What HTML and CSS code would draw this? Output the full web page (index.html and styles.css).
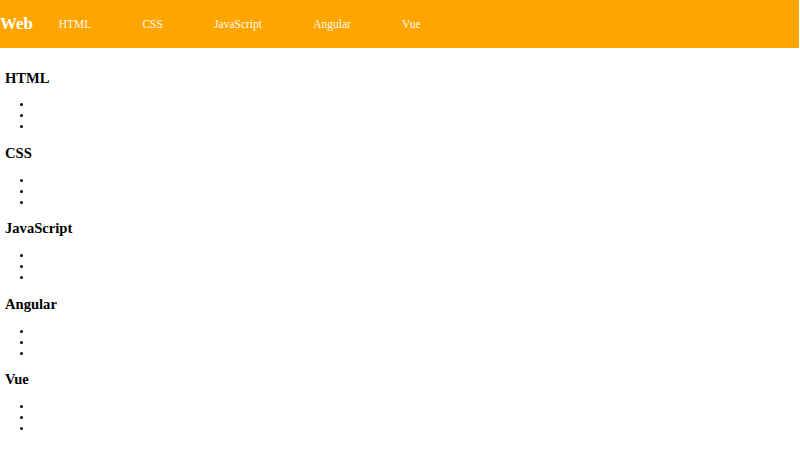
FILE: index.html
```html
<!DOCTYPE html>
<html>
<head>
<meta charset="utf-8">
<link rel="stylesheet" href="styles.css">
</head>
<body>
<header class="topbar">
  <div class="brand">Web</div>
  <nav class="nav">
    <a class="nav-link" href="#html">HTML</a>
    <a class="nav-link" href="#css">CSS</a>
    <a class="nav-link" href="#js">JavaScript</a>
    <a class="nav-link" href="#angular">Angular</a>
    <a class="nav-link" href="#vue">Vue</a>
  </nav>
</header>
<main class="content">
  <section class="topic" id="html">
    <h3 class="topic-title">HTML</h3>
    <ul class="topic-list"><li></li><li></li><li></li></ul>
  </section>
  <section class="topic" id="css">
    <h3 class="topic-title">CSS</h3>
    <ul class="topic-list"><li></li><li></li><li></li></ul>
  </section>
  <section class="topic" id="js">
    <h3 class="topic-title">JavaScript</h3>
    <ul class="topic-list"><li></li><li></li><li></li></ul>
  </section>
  <section class="topic" id="angular">
    <h3 class="topic-title">Angular</h3>
    <ul class="topic-list"><li></li><li></li><li></li></ul>
  </section>
  <section class="topic" id="vue">
    <h3 class="topic-title">Vue</h3>
    <ul class="topic-list"><li></li><li></li><li></li></ul>
  </section>
</main>
</body>
</html>
```
FILE: styles.css
```css
html, body {
  margin: 0;
  padding: 0;
}
body {
  font-family: "Liberation Serif", "Times New Roman", serif;
  color: #000;
  background: #fff;
}
.topbar {
  display: flex;
  align-items: center;
  height: 48px;
  width: 799px;
  background: #ffa500;
}
.brand {
  font-size: 17px;
  font-weight: bold;
  color: #fff;
}
.nav {
  display: flex;
}
.nav-link {
  font-size: 11.5px;
  color: #fffaf0;
  text-decoration: none;
  padding: 0 25.6px;
}
.content {
  padding: 9px 5px 0 5px;
}
.topic-title {
  font-size: 14.6px;
  font-weight: bold;
  margin: 12.7px 0;
}
.topic-list {
  font-size: 10px;
  margin: 12.7px 0;
  padding-left: 28px;
}
```
